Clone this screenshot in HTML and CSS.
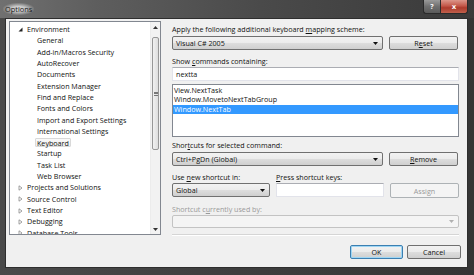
FILE: index.html
```html
<!DOCTYPE html>
<html>
<head>
<meta charset="utf-8">
<link rel="stylesheet" href="styles.css">
</head>
<body>
<div class="window">
  <div class="titlebar">
    <span class="title">Options</span>
    <div class="caption-btns">
      <div class="cb help">?</div>
      <div class="cb close">x</div>
    </div>
  </div>
  <div class="client">
    <div class="main">
      <div class="tree">
        <div class="tree-items">
          <div class="ti lvl0"><svg class="exp" width="5" height="5" viewBox="0 0 5 5"><path d="M4.5 0.5 L4.5 4.5 L0.5 4.5 Z" fill="#222"/></svg>Environment</div>
          <div class="ti lvl1">General</div>
          <div class="ti lvl1">Add-in/Macros Security</div>
          <div class="ti lvl1">AutoRecover</div>
          <div class="ti lvl1">Documents</div>
          <div class="ti lvl1">Extension Manager</div>
          <div class="ti lvl1">Find and Replace</div>
          <div class="ti lvl1">Fonts and Colors</div>
          <div class="ti lvl1">Import and Export Settings</div>
          <div class="ti lvl1">International Settings</div>
          <div class="ti lvl1"><span class="sel">Keyboard</span></div>
          <div class="ti lvl1">Startup</div>
          <div class="ti lvl1">Task List</div>
          <div class="ti lvl1">Web Browser</div>
          <div class="ti lvl0"><svg class="exp" width="5" height="6" viewBox="0 0 5 6"><path d="M1 0.8 L4 3 L1 5.2 Z" fill="none" stroke="#8a8a8a" stroke-width="0.8"/></svg>Projects and Solutions</div>
          <div class="ti lvl0"><svg class="exp" width="5" height="6" viewBox="0 0 5 6"><path d="M1 0.8 L4 3 L1 5.2 Z" fill="none" stroke="#8a8a8a" stroke-width="0.8"/></svg>Source Control</div>
          <div class="ti lvl0"><svg class="exp" width="5" height="6" viewBox="0 0 5 6"><path d="M1 0.8 L4 3 L1 5.2 Z" fill="none" stroke="#8a8a8a" stroke-width="0.8"/></svg>Text Editor</div>
          <div class="ti lvl0"><svg class="exp" width="5" height="6" viewBox="0 0 5 6"><path d="M1 0.8 L4 3 L1 5.2 Z" fill="none" stroke="#8a8a8a" stroke-width="0.8"/></svg>Debugging</div>
          <div class="ti lvl0"><svg class="exp" width="5" height="6" viewBox="0 0 5 6"><path d="M1 0.8 L4 3 L1 5.2 Z" fill="none" stroke="#8a8a8a" stroke-width="0.8"/></svg>Database Tools</div>
        </div>
        <div class="vscroll">
          <div class="arrow up"><svg width="5" height="3" viewBox="0 0 5 3"><path d="M0 3 L2.5 0 L5 3 Z" fill="#333"/></svg></div>
          <div class="track">
            <div class="thumb"><div class="grip"></div></div>
          </div>
          <div class="arrow down"><svg width="5" height="3" viewBox="0 0 5 3"><path d="M0 0 L2.5 3 L5 0 Z" fill="#333"/></svg></div>
        </div>
      </div>
      <div class="page">
        <div class="lbl l1">Apply the following additional keyboard <u>m</u>apping scheme:</div>
        <div class="row r1">
          <div class="combo wide"><span>Visual C# 2005</span><svg class="dd" width="5" height="3" viewBox="0 0 5 3"><path d="M0 0 L5 0 L2.5 3 Z" fill="#111"/></svg></div>
          <div class="btn side">R<u>e</u>set</div>
        </div>
        <div class="lbl l2">Show <u>c</u>ommands containing:</div>
        <div class="textbox full"><span>nextta</span></div>
        <div class="listbox">
          <div class="li">View.NextTask</div>
          <div class="li">Window.MovetoNextTabGroup</div>
          <div class="li selected">Window.NextTab</div>
        </div>
        <div class="lbl l3">Shor<u>t</u>cuts for selected command:</div>
        <div class="row r2">
          <div class="combo wide"><span>Ctrl+PgDn (Global)</span><svg class="dd" width="5" height="3" viewBox="0 0 5 3"><path d="M0 0 L5 0 L2.5 3 Z" fill="#111"/></svg></div>
          <div class="btn side"><u>R</u>emove</div>
        </div>
        <div class="row lblrow">
          <div class="lbl lcol1">Use <u>n</u>ew shortcut in:</div>
          <div class="lbl lcol2"><u>P</u>ress shortcut keys:</div>
        </div>
        <div class="row r3">
          <div class="combo narrow"><span>Global</span><svg class="dd" width="5" height="3" viewBox="0 0 5 3"><path d="M0 0 L5 0 L2.5 3 Z" fill="#111"/></svg></div>
          <div class="textbox keys"></div>
          <div class="btn side disabled">Assi<u>g</u>n</div>
        </div>
        <div class="lbl l5 dis">Shortcut c<u>u</u>rrently used by:</div>
        <div class="combo full disabledcombo"><span></span><svg class="dd" width="5" height="3" viewBox="0 0 5 3"><path d="M0 0 L5 0 L2.5 3 Z" fill="#b0b0b0"/></svg></div>
        <div class="separator"></div>
      </div>
    </div>
    <div class="footer">
      <div class="btn default">OK</div>
      <div class="btn cancel">Cancel</div>
    </div>
  </div>
</div>
</body>
</html>
```

FILE: styles.css
```css
* { box-sizing: border-box; }
html, body { margin: 0; padding: 0; }
body {
  width: 474px;
  height: 275px;
  overflow: hidden;
  background: #2b2b2b;
  font-family: "Open Sans", "Noto Sans", sans-serif;
  font-size: 7.15px;
  color: #111;
}
.window {
  width: 474px;
  height: 275px;
  display: flex;
  flex-direction: column;
  background: linear-gradient(90deg, #4a4a4a 0%, #3e3e3e 50%, #353535 100%);
}
.titlebar {
  height: 18px;
  flex: none;
  display: flex;
  align-items: flex-start;
  justify-content: space-between;
  background: linear-gradient(90deg, #707070 0%, #5e5e5e 20%, #4a4a4a 55%, #3a3a3a 100%);
}
.title {
  margin: 3px 0 0 3px;
  padding: 0 2px;
  line-height: 12px;
  font-size: 7.4px;
  color: #1a1a1a;
  background: radial-gradient(ellipse at center, rgba(235,235,235,0.75) 30%, rgba(235,235,235,0) 75%);
}
.caption-btns {
  display: flex;
  margin-right: 6px;
}
.cb {
  height: 14px;
  display: flex;
  align-items: center;
  justify-content: center;
  color: #fff;
  font-weight: bold;
  font-size: 7px;
  border: 1px solid #2a2a2a;
  border-top: none;
}
.help {
  width: 17px;
  border-radius: 0 0 0 3px;
  background: linear-gradient(180deg, #9a9a9a 0%, #6f6f6f 50%, #5a5a5a 100%);
  border-right: none;
}
.close {
  width: 28px;
  border-radius: 0 0 3px 0;
  background: linear-gradient(180deg, #dc968a 0%, #c4584a 45%, #ad3a2c 60%, #c0604c 100%);
  font-family: "DejaVu Sans", sans-serif;
}
.client {
  flex: none;
  height: 250px;
  margin: 0 6px 0 5px;
  background: #f0f0f0;
  border: 1px solid #2e2e2e;
  padding: 2px 6px 0 3px;
  display: flex;
  flex-direction: column;
}
.main {
  height: 214px;
  flex: none;
  display: flex;
  gap: 11px;
}
.tree {
  width: 152px;
  height: 214px;
  border: 1px solid #828790;
  background: #fff;
  display: flex;
  overflow: hidden;
}
.tree-items {
  flex: 1;
  padding-top: 2px;
  overflow: hidden;
}
.ti {
  height: 11.32px;
  line-height: 11.32px;
  white-space: nowrap;
  display: flex;
  align-items: center;
}
.ti.lvl0 { padding-left: 8px; }
.ti.lvl1 { padding-left: 27px; }
.exp { margin-right: 4px; flex: none; }
.sel {
  display: inline-block;
  line-height: 8px;
  height: 9px;
  padding: 0 1px;
  margin-left: -2px;
  border: 1px solid #d9d9d9;
  border-radius: 1px;
  background: linear-gradient(180deg, #fafafa, #ececec);
}
.vscroll {
  width: 10px;
  flex: none;
  display: flex;
  flex-direction: column;
  background: #f2f2f2;
  border-left: 1px solid #ececec;
}
.arrow {
  height: 10px;
  display: flex;
  align-items: center;
  justify-content: center;
}
.track {
  flex: 1;
  padding: 5px 0 0 0;
}
.thumb {
  margin: 0 1px;
  height: 113px;
  border: 1px solid #979797;
  border-radius: 2px;
  background: linear-gradient(90deg, #f1f1f1, #dedede);
  display: flex;
  align-items: center;
  justify-content: center;
}
.grip {
  width: 4px;
  height: 4px;
  border-top: 1px solid #777;
  border-bottom: 1px solid #777;
}
.grip::after {
  content: "";
  display: block;
  height: 1px;
  margin-top: 0.5px;
  background: #777;
}
.page {
  width: 287px;
  display: flex;
  flex-direction: column;
}
.lbl {
  height: 10px;
  line-height: 10px;
  white-space: nowrap;
}
.lbl.dis { color: #9a9a9a; }
.l1 { margin-top: 3px; }
.row { display: flex; gap: 6px; }
.r1 { margin-top: 2px; }
.l2 { margin-top: 6px; }
.textbox {
  height: 14px;
  border: 1px solid #e2e3ea;
  border-top-color: #abadb3;
  background: #fff;
  display: flex;
  align-items: center;
  padding-left: 3px;
}
.textbox.full { margin-top: 1px; width: 287px; }
.listbox {
  margin-top: 3px;
  height: 53px;
  border: 1px solid #828790;
  background: #fff;
  padding-top: 1px;
}
.li {
  height: 9.3px;
  line-height: 9.3px;
  padding-left: 1px;
}
.li.selected { background: #3399ff; color: #fff; }
.l3 { margin-top: 3px; }
.r2 { margin-top: 2px; }
.lblrow { margin-top: 6px; gap: 0; }
.lcol1 { width: 104px; }
.r3 { margin-top: 1px; }
.l5 { margin-top: 6px; }
.combo {
  height: 14px;
  border: 1px solid #707070;
  border-radius: 2px;
  background: linear-gradient(180deg, #f2f2f2 0%, #ebebeb 50%, #dddddd 51%, #cfcfcf 100%);
  display: flex;
  align-items: center;
  justify-content: space-between;
  padding: 0 4px 0 3px;
}
.combo.wide { width: 211px; }
.combo.narrow { width: 98px; }
.combo.full { width: 287px; }
.combo.disabledcombo {
  margin-top: 1px;
  height: 13px;
  border-color: #c3c3c3;
  background: #f4f4f4;
}
.textbox.keys { width: 108px; }
.btn {
  height: 14px;
  border: 1px solid #707070;
  border-radius: 2px;
  background: linear-gradient(180deg, #f2f2f2 0%, #ebebeb 50%, #dddddd 51%, #cfcfcf 100%);
  display: flex;
  align-items: center;
  justify-content: center;
  line-height: 10px;
}
.btn.side { width: 69px; }
.btn.disabled {
  border-color: #adb2b5;
  background: #f4f4f4;
  color: #9a9a9a;
  height: 15px;
}
.separator {
  margin-top: auto;
  height: 1px;
  background: #d5d5d5;
  border-bottom: 1px solid #fff;
  box-sizing: content-box;
  margin-bottom: -1px;
}
.footer {
  margin-top: 10px;
  display: flex;
  justify-content: flex-end;
  gap: 4px;
}
.footer .btn { height: 14px; }
.btn.default {
  width: 53px;
  border-color: #3c7fb1;
  box-shadow: inset 0 0 0 1px #9fd6f4;
}
.btn.cancel { width: 54px; }
```
